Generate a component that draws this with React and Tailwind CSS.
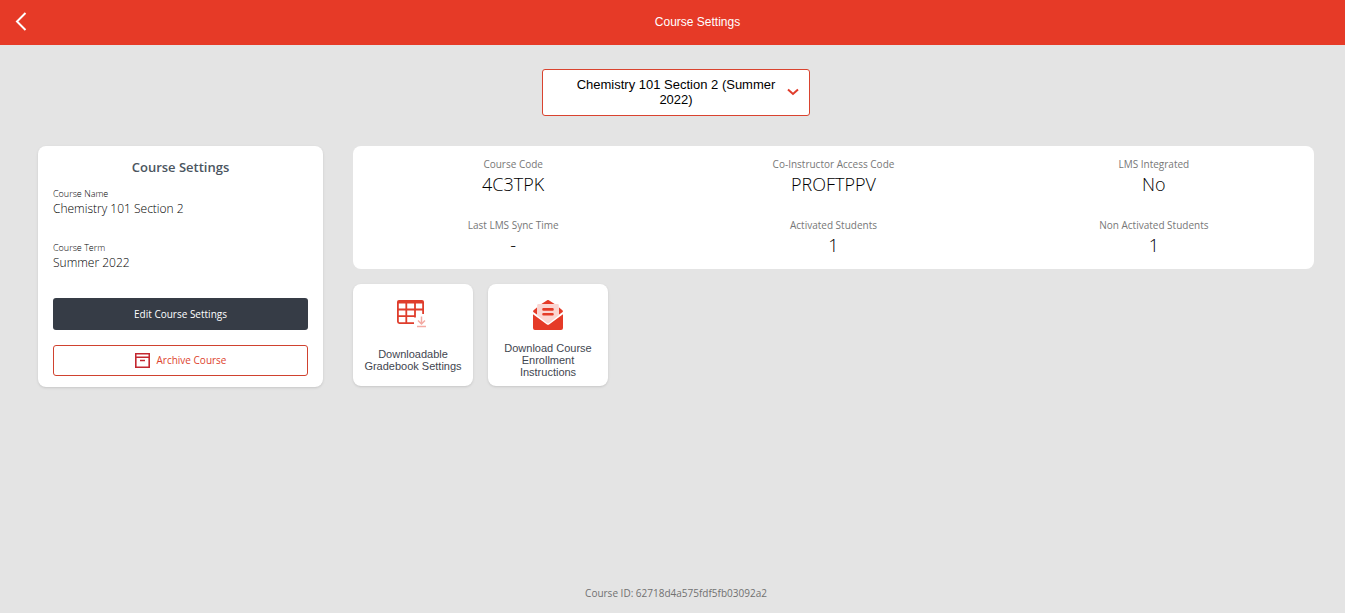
import { useState } from "react";

const courses = ["Chemistry 101 Section 2 (Summer 2022)"];

const details = [
  { label: "Course Code", value: "4C3TPK" },
  { label: "Co-Instructor Access Code", value: "PROFTPPV" },
  { label: "LMS Integrated", value: "No" },
  { label: "Last LMS Sync Time", value: "-" },
  { label: "Activated Students", value: "1" },
  { label: "Non Activated Students", value: "1" },
];

function BackIcon() {
  return (
    <svg className="h-5 w-3" viewBox="0 0 12 20" fill="none" stroke="currentColor" strokeWidth="2">
      <path d="M10.5 1L2 9.5l8.5 8.5" />
    </svg>
  );
}

function ChevronIcon() {
  return (
    <svg className="h-2 w-3 text-[#e03c2b]" viewBox="0 0 12 8" fill="none" stroke="currentColor" strokeWidth="2">
      <path d="M1 1.5l5 4.5 5-4.5" />
    </svg>
  );
}

function ArchiveIcon() {
  return (
    <svg className="h-[15px] w-[15px] text-[#c3272f]" viewBox="0 0 15 15" fill="none" stroke="currentColor">
      <path strokeWidth="1.5" d="M.75.75h13.5v3.5H.75z" />
      <path strokeWidth="1.6" d="M.8 4v10.2h13.4V4" />
      <path strokeWidth="1.5" d="M5 7.5h5" />
    </svg>
  );
}

function GradebookIcon() {
  return (
    <svg className="h-[30px] w-8" viewBox="0 0 32 30" fill="none">
      <g stroke="#df3d2c" strokeWidth="1.8">
        <path d="M17 23.2H2.5A1.7 1.7 0 01.9 21.5V2.5M26.1 2.5V14" />
        <path d="M9.3 3v20M18 3v14.5M1 9.5h25M1 16.2h17.5" />
      </g>
      <path fill="#df3d2c" d="M0 3.5V2a2 2 0 012-2h23a2 2 0 012 2v1.5z" />
      <path stroke="#f3aaa3" strokeWidth="1.5" d="M24.5 16.5v7M21 20.5l3.5 3.5 3.5-3.5M20 26.5h9" />
    </svg>
  );
}

function EnrollmentIcon() {
  return (
    <svg className="h-[30px] w-[30px]" viewBox="0 0 30 30" fill="none">
      <g fill="#e53a27">
        <path d="M8 4.2l5.8-3.8a2 2 0 012.4 0L22 4.2z" />
        <path d="M4.2 7.2v7.6L.3 11.9c-.4-.6-.2-1.2.3-1.7zM25.8 7.2v7.6l3.9-2.9c.4-.6.2-1.2-.3-1.7z" />
        <path d="M0 14.2l13.6 10.1a2.4 2.4 0 002.8 0L30 14.2V28a2 2 0 01-2 2H2a2 2 0 01-2-2z" />
      </g>
      <path fill="#fbd5d1" d="M5.5 4h19a1.3 1.3 0 011.3 1.3v10.2l-9.8 7.4a1.8 1.8 0 01-2 0l-9.8-7.4V5.3A1.3 1.3 0 015.5 4z" />
      <path stroke="#e53a27" strokeWidth="2.6" strokeLinecap="round" d="M10.5 9.4h9M10.5 14.2h9" />
    </svg>
  );
}

function Field({ label, value }) {
  return (
    <div>
      <dt className="text-[9px] leading-4 font-light text-black">{label}</dt>
      <dd className="text-[12px] leading-[14px] font-light text-black">{value}</dd>
    </div>
  );
}

function Tile({ icon, children }) {
  return (
    <button
      type="button"
      className="flex w-[120px] flex-col items-center rounded-lg bg-white px-2 pt-4 pb-2 font-['Liberation_Sans',sans-serif] text-[11px] leading-3 text-[#3f4650] shadow"
    >
      {icon}
      <span className="mt-3 flex h-9 items-center">
        <span>{children}</span>
      </span>
    </button>
  );
}

export default function App() {
  const [course, setCourse] = useState(courses[0]);

  return (
    <div className="flex min-h-screen flex-col bg-[#e4e4e4] font-['Open_Sans',sans-serif]">
      {/* Top bar */}
      <header className="flex h-[45px] items-center bg-[#e63a27] pb-0.5 text-white">
        <button type="button" aria-label="Back" className="flex h-full w-[50px] items-center pl-[15px]">
          <BackIcon />
        </button>
        <h1 className="flex-1 text-center font-['Liberation_Sans',sans-serif] text-[12px] leading-4">
          Course Settings
        </h1>
      </header>

      <main className="flex flex-1 flex-col pt-6 pr-[31px] pb-3 pl-[38px]">
        {/* Course picker, the native select sits over the wrapped label */}
        <div className="relative mx-auto flex w-[268px] items-center rounded-[3px] border border-[#d9432f] bg-white pt-[7px] pr-2.5 pb-2 pl-[22px] focus-within:ring-1 focus-within:ring-[#e63a27]">
          <span
            aria-hidden="true"
            className="flex-1 text-center font-['Liberation_Sans',sans-serif] text-[13px] leading-[15px] text-black"
          >
            {course}
          </span>
          <ChevronIcon />
          <select
            aria-label="Course"
            value={course}
            onChange={(e) => setCourse(e.target.value)}
            className="absolute inset-0 h-full w-full cursor-pointer opacity-0"
          >
            {courses.map((name) => (
              <option key={name}>{name}</option>
            ))}
          </select>
        </div>

        <div className="mt-[30px] flex items-start gap-[30px]">
          {/* Settings card */}
          <section className="w-[285px] shrink-0 rounded-lg bg-white px-[15px] pt-2.5 pb-[11px] shadow">
            <h2 className="text-center text-[13px] leading-[22px] font-semibold text-[#4b5560]">
              Course Settings
            </h2>
            <dl className="mt-2 flex flex-col gap-6">
              <Field label="Course Name" value="Chemistry 101 Section 2" />
              <Field label="Course Term" value="Summer 2022" />
            </dl>
            <button
              type="button"
              className="mt-7 h-8 w-full rounded-[3px] bg-[#363c46] text-[10px] text-white"
            >
              Edit Course Settings
            </button>
            <button
              type="button"
              className="mt-[15px] flex h-[31px] w-full items-center justify-center gap-[7px] rounded-[3px] border border-[#d0422f] text-[10px] text-[#dd3f2d]"
            >
              <ArchiveIcon />
              Archive Course
            </button>
          </section>

          <div className="flex-1">
            <dl className="grid grid-cols-3 gap-y-[21px] rounded-lg bg-white pt-2.5 pb-3 text-center">
              {details.map((item) => (
                <div key={item.label}>
                  <dt className="text-[10px] leading-4 text-[#777777]">{item.label}</dt>
                  <dd className="text-[18px] leading-6 font-light text-black">{item.value}</dd>
                </div>
              ))}
            </dl>

            <div className="mt-[15px] flex gap-[15px]">
              <Tile icon={<GradebookIcon />}>Downloadable Gradebook Settings</Tile>
              <Tile icon={<EnrollmentIcon />}>Download Course Enrollment Instructions</Tile>
            </div>
          </div>
        </div>

        <p className="mt-auto text-center text-[10px] leading-4 text-[#717171]">
          Course ID: 62718d4a575fdf5fb03092a2
        </p>
      </main>
    </div>
  );
}
